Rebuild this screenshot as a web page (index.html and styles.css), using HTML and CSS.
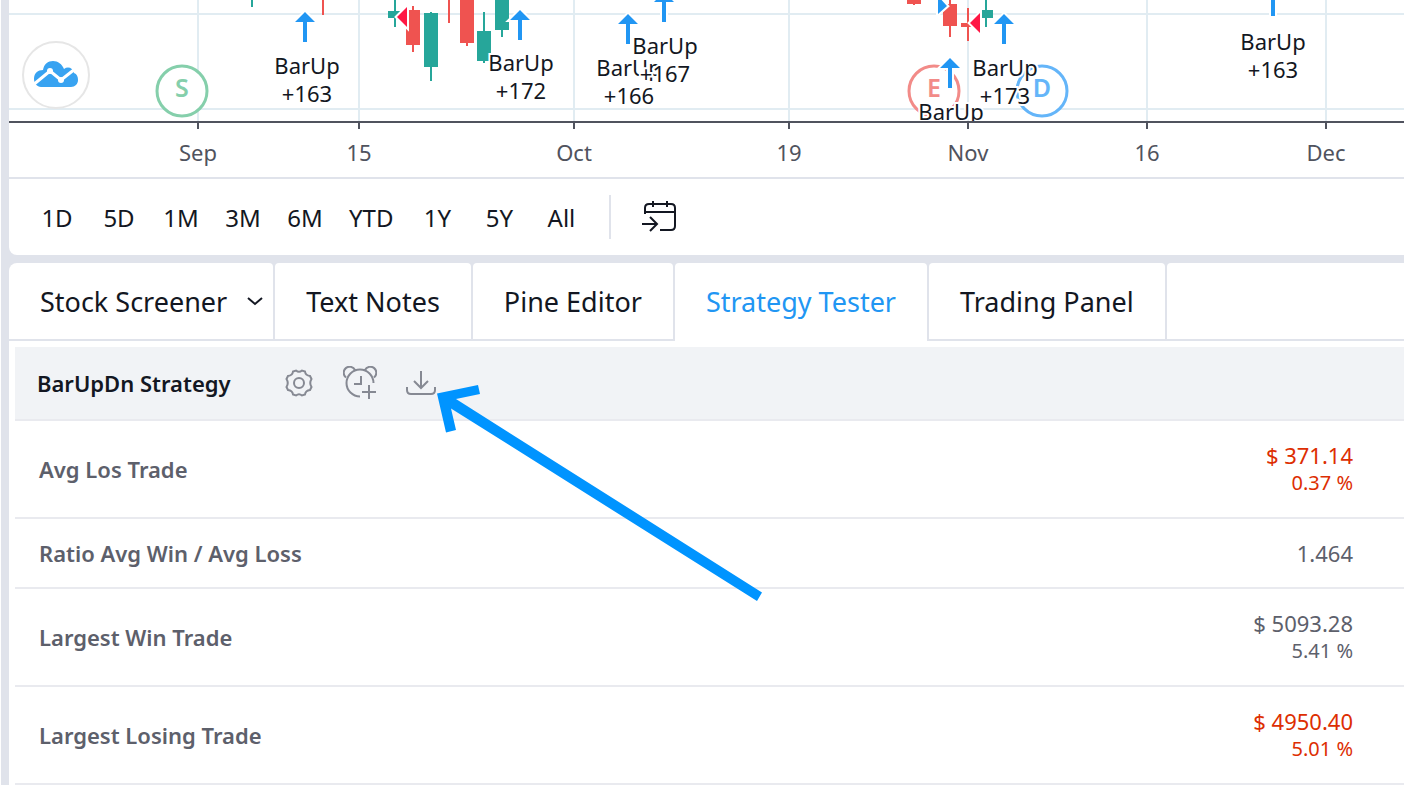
FILE: index.html
```
<!DOCTYPE html>
<html lang="en">
<head>
    <meta charset="UTF-8">
    <meta name="viewport" content="width=device-width, initial-scale=1.0">
    <title>Strategy Tester</title>
    <link rel="stylesheet" href="styles.css">
</head>
<body>
    <div class="layout">
        <section class="chart-panel">
            <svg class="chart" role="img" aria-label="Price chart">
                <defs>
                    <path id="arrow-up" d="M0 0L10 10H2V30H-2V10H-10Z"/>
                </defs>

                <!-- plot area, clipped at the time axis -->
                <svg width="100%" height="122">
                    <g class="grid">
                        <line x1="0" x2="100%" y1="14" y2="14"/>
                        <line x1="0" x2="100%" y1="109" y2="109"/>
                        <path d="M189 0V122M350 0V122M565 0V122M780 0V122M959 0V122M1138 0V122M1317 0V122"/>
                    </g>

                    <!-- logo -->
                    <circle class="logo-ring" cx="47" cy="75" r="33"/>
                    <path class="logo-cloud" d="M32 87C28 87 25 83 25 79C25 73 29 70 34 70C35 64 39 61 44 61C49 61 53 64 55 69C59 66 64 68 65 73C68 74 69 77 69 80C69 84 66 87 62 87Z"/>
                    <path class="logo-line" d="M24 85L41 71L52 80L66 69"/>
                    <circle class="logo-dot" cx="41" cy="71" r="3"/>
                    <circle class="logo-dot" cx="52" cy="80" r="3"/>

                    <g class="event event-split">
                        <circle cx="173" cy="91" r="25"/>
                        <text x="173" y="97">S</text>
                    </g>
                    <g class="event event-earnings">
                        <circle cx="925" cy="91" r="25"/>
                        <text x="925" y="97">E</text>
                    </g>
                    <g class="event event-dividend">
                        <circle cx="1033" cy="91" r="25"/>
                        <text x="1033" y="97">D</text>
                    </g>

                    <path class="up" d="M242 0h2v7h-2zM385 0h2v27h-2zM379 11h12v7h-12zM415 13h14v54h-14zM421 12h2v69h-2zM468 31h14v30h-14zM474 12h2v51h-2zM486 0h14v30h-14zM492 0h2v37h-2zM973 10h11v8h-11zM976 0h2v27h-2z"/>
                    <path class="down" d="M313 0h2v15h-2zM397 10h14v35h-14zM403 6h2v46h-2zM439 0h2v23h-2zM451 0h14v43h-14zM457 0h2v46h-2zM898 0h14v4h-14zM904 0h2v5h-2zM934 4h14v22h-14zM940 0h2v37h-2zM952 23h14v4h-14zM958 8h2v33h-2z"/>

                    <g class="exit">
                        <path d="M388 17L398 7V27Z"/>
                        <path d="M961 23L971 13V33Z"/>
                    </g>
                    <g class="entry">
                        <path d="M938 6L929 -4V14Z"/>
                        <use href="#arrow-up" x="296" y="12"/>
                        <use href="#arrow-up" x="511" y="10"/>
                        <use href="#arrow-up" x="619" y="14"/>
                        <use href="#arrow-up" x="655" y="-8"/>
                        <use href="#arrow-up" x="941" y="58"/>
                        <use href="#arrow-up" x="995" y="14"/>
                        <use href="#arrow-up" x="1264" y="-14"/>
                    </g>

                    <g class="signal">
                        <text x="298" y="74">BarUp</text><text x="298" y="102">+163</text>
                        <text x="512" y="71">BarUp</text><text x="512" y="99">+172</text>
                        <text x="620" y="76">BarUp</text><text x="620" y="104">+166</text>
                        <text x="656" y="54">BarUp</text><text x="656" y="82">+167</text>
                        <text x="942" y="120">BarUp</text>
                        <text x="996" y="76">BarUp</text><text x="996" y="104">+173</text>
                        <text x="1264" y="50">BarUp</text><text x="1264" y="78">+163</text>
                    </g>
                </svg>

                <g class="axis">
                    <line x1="0" x2="100%" y1="122" y2="122"/>
                    <path d="M189 122v7M350 122v7M565 122v7M780 122v7M959 122v7M1138 122v7M1317 122v7"/>
                    <text x="189" y="161">Sep</text>
                    <text x="350" y="161">15</text>
                    <text x="565" y="161">Oct</text>
                    <text x="780" y="161">19</text>
                    <text x="959" y="161">Nov</text>
                    <text x="1138" y="161">16</text>
                    <text x="1317" y="161">Dec</text>
                </g>
            </svg>

            <div class="ranges">
                <button type="button">1D</button>
                <button type="button">5D</button>
                <button type="button">1M</button>
                <button type="button">3M</button>
                <button type="button">6M</button>
                <button type="button">YTD</button>
                <button type="button">1Y</button>
                <button type="button">5Y</button>
                <button type="button">All</button>
                <span class="separator"></span>
                <button type="button" aria-label="Go to date">
                    <svg class="icon-date" width="36" height="32" viewBox="0 0 36 32">
                        <path d="M4 13V7Q4 3 8 3H30Q34 3 34 7V25Q34 29 30 29H19M4 11H34M12 0V6M26 0V6M1 23H16M9 16L16 23L9 30"/>
                    </svg>
                </button>
            </div>
        </section>

        <section class="bottom-panel">
            <nav class="tabs">
                <button type="button" class="tab tab-menu">Stock Screener
                    <svg class="chevron" width="16" height="10" viewBox="0 0 16 10"><path d="M1 2L8 8L15 2"/></svg>
                </button>
                <button type="button" class="tab">Text Notes</button>
                <button type="button" class="tab">Pine Editor</button>
                <button type="button" class="tab active">Strategy Tester</button>
                <button type="button" class="tab">Trading Panel</button>
                <span class="tab-fill"></span>
            </nav>

            <div class="report">
                <div class="report-header">
                    <h2>BarUpDn Strategy</h2>
                    <div class="tools">
                        <button type="button" aria-label="Settings">
                            <svg width="32" height="32" viewBox="0 0 32 32">
                                <circle cx="16" cy="16" r="5"/>
                                <path d="M13 3.500Q16 6 19 3.500L22 4.500Q22.500 8.500 27 9L28.500 12Q26 16 28.500 20L27 23Q22.500 23.500 22 27.500L19 28.500Q16 26 13 28.500L10 27.500Q9.500 23.500 5 23L3.500 20Q6 16 3.500 12L5 9Q9.500 8.500 10 4.500Z"/>
                            </svg>
                        </button>
                        <button type="button" aria-label="Add alert">
                            <svg width="34" height="34" viewBox="0 0 34 34">
                                <path d="M17 30.500A13.500 13.500 0 1 1 30.500 17M18 10V18H11M19 26H33M26 19V33M3 11.500A6 6 0 1 1 12 4M22 4A6 6 0 1 1 31 11.500"/>
                            </svg>
                        </button>
                        <button type="button" aria-label="Export data">
                            <svg width="32" height="32" viewBox="0 0 32 32">
                                <path d="M16 4V21M9 14L16 21L23 14M2 20V23Q2 27 6 27H26Q30 27 30 23V20"/>
                            </svg>
                        </button>
                    </div>
                </div>

                <table class="stats">
                    <tr>
                        <th scope="row">Avg Los Trade</th>
                        <td class="negative">$ 371.14<span class="percent">0.37 %</span></td>
                    </tr>
                    <tr>
                        <th scope="row">Ratio Avg Win / Avg Loss</th>
                        <td>1.464</td>
                    </tr>
                    <tr>
                        <th scope="row">Largest Win Trade</th>
                        <td>$ 5093.28<span class="percent">5.41 %</span></td>
                    </tr>
                    <tr>
                        <th scope="row">Largest Losing Trade</th>
                        <td class="negative">$ 4950.40<span class="percent">5.01 %</span></td>
                    </tr>
                </table>

                <!-- arrow pointing at the export button -->
                <svg class="pointer" width="330" height="220" viewBox="435 385 330 220" aria-hidden="true">
                    <path d="M437 393.500L478 385L480 394L456 399L762 592.500L757 601L451 408.500L456 430L446 432.500Z"/>
                </svg>
            </div>
        </section>
    </div>
</body>
</html>
```
FILE: styles.css
```
* {
    margin: 0;
    padding: 0;
    box-sizing: border-box;
}

body {
    font-family: "Noto Sans", sans-serif;
    background-color: #fff;
    color: #131722;
    padding-left: 1px;
    overflow: hidden;
}

button {
    font: inherit;
    color: inherit;
    background: none;
    border: none;
    cursor: pointer;
}

svg {
    display: block;
}

.layout {
    display: flex;
    flex-direction: column;
    gap: 8px;
    min-height: 100vh;
    padding-left: 8px;
    background-color: #e0e3eb;
}

.chart-panel {
    background-color: #fff;
    border-radius: 0 0 0 8px;
}

/* chart */
.chart {
    width: 100%;
    height: 177px;
    font-size: 22px;
    text-anchor: middle;
}

.grid {
    stroke: #e1ecf2;
    stroke-width: 2;
}

.logo-ring {
    fill: #fff;
    stroke: #e6e6e6;
    stroke-width: 2;
}

.logo-cloud {
    fill: #38a3f1;
}

.logo-line {
    fill: none;
    stroke: #fff;
    stroke-width: 3;
}

.logo-dot {
    fill: #fff;
}

.event circle {
    fill: #fff;
    stroke: currentColor;
    stroke-width: 3;
}

.event text {
    font-size: 25px;
    font-weight: 600;
    fill: currentColor;
}

.event-split {
    color: #85cfab;
}

.event-earnings {
    color: #f28b88;
}

.event-dividend {
    color: #64b5f9;
}

.up {
    fill: #26a69a;
}

.down {
    fill: #ef5350;
}

.entry,
.exit,
.signal {
    stroke: #fff;
    stroke-width: 4;
    paint-order: stroke;
}

.entry {
    fill: #2196f3;
}

.exit {
    fill: #ff1744;
}

.signal {
    fill: #131722;
}

.axis {
    stroke: #50535e;
    stroke-width: 2;
}

.axis text {
    fill: #50535e;
    stroke: none;
}

/* date ranges */
.ranges {
    display: flex;
    align-items: center;
    gap: 26px;
    height: 78px;
    padding: 0 30px;
    border-top: 2px solid #e0e3eb;
    font-size: 24px;
}

.ranges button {
    min-width: 36px;
}

.separator {
    width: 2px;
    height: 44px;
    margin: 0 4px;
    background-color: #e0e3eb;
}

.icon-date,
.chevron {
    fill: none;
    stroke: #131722;
    stroke-width: 2;
}

/* tabs */
.bottom-panel {
    flex: 1;
    background-color: #fff;
    border-radius: 8px 0 0 0;
}

.tabs {
    display: flex;
    gap: 2px;
    height: 78px;
    background-color: #e0e3eb;
    font-size: 27px;
}

.tab,
.tab-fill {
    background-color: #fff;
    border-bottom: 2px solid #e0e3eb;
    border-radius: 4px 4px 0 0;
}

.tab {
    padding: 0 31px;
    white-space: nowrap;
}

.tab-menu {
    display: flex;
    align-items: center;
    gap: 20px;
    padding-right: 10px;
    border-top-left-radius: 8px;
}

.tab-fill {
    flex: 1;
    border-top-right-radius: 0;
}

.tab.active {
    color: #2196f3;
    border-bottom-color: #fff;
}

/* strategy report */
.report {
    position: relative;
    padding: 6px 0 0 6px;
}

.report-header {
    display: flex;
    align-items: center;
    gap: 52px;
    height: 74px;
    padding-left: 22px;
    background-color: #f1f3f6;
    border-bottom: 2px solid #e9eaef;
}

.report-header h2 {
    font-size: 22px;
    font-weight: 600;
}

.tools {
    display: flex;
    align-items: center;
    gap: 28px;
}

.tools svg {
    fill: none;
    stroke: #868993;
    stroke-width: 2;
}

.stats {
    width: 100%;
    border-collapse: collapse;
    font-size: 22px;
    line-height: 28px;
    color: #5d606b;
}

.stats th,
.stats td {
    padding: 20px 24px;
    border-bottom: 2px solid #e9eaef;
}

.stats th {
    font-weight: 600;
    text-align: left;
}

.stats td {
    padding-right: 51px;
    text-align: right;
}

.stats .negative {
    color: #dd2e02;
}

.percent {
    display: block;
    font-size: 20px;
}

.pointer {
    position: absolute;
    left: 426px;
    top: 44px;
    fill: #0094ff;
    pointer-events: none;
}
```
